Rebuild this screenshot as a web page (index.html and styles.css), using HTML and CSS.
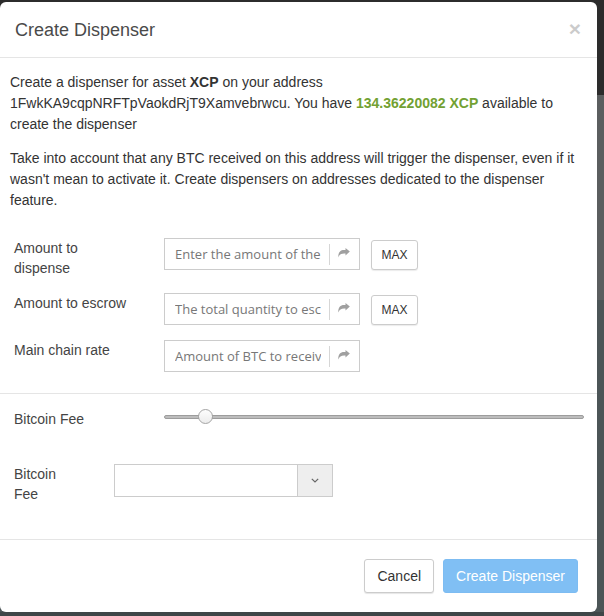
FILE: index.html
```html
<!DOCTYPE html>
<html>
<head>
<meta charset="utf-8">
<link rel="stylesheet" href="styles.css">
</head>
<body>
<div class="modal">
  <div class="modal-header">
    <h4 class="title">Create Dispenser</h4>
    <span class="close">×</span>
  </div>
  <div class="modal-body">
    <p>Create a dispenser for asset <b>XCP</b> on your address 1FwkKA9cqpNRFTpVaokdRjT9Xamvebrwcu. You have <b class="green">134.36220082 XCP</b> available to create the dispenser</p>
    <p class="last">Take into account that any BTC received on this address will trigger the dispenser, even if it wasn't mean to activate it. Create dispensers on addresses dedicated to the dispenser feature.</p>
    <div class="form">
      <div class="row">
        <label class="lbl">Amount to dispense</label>
        <div class="ig">
          <input class="ig-input" placeholder="Enter the amount of the asset to dispense">
          <span class="sep"></span>
          <span class="ig-icon"><svg width="12" height="10" viewBox="0 0 14 12"><path d="M14 4.3 L8.8 0 V2.4 H7.2 C2.4 2.4 0.2 5 0 11.5 C1.4 8 3.6 6.6 7.2 6.6 H8.8 V9 Z" fill="#a0a0a0"/></svg></span>
        </div>
        <button class="max">MAX</button>
      </div>
      <div class="row">
        <label class="lbl">Amount to escrow</label>
        <div class="ig">
          <input class="ig-input" placeholder="The total quantity to escrow in the dispenser">
          <span class="sep"></span>
          <span class="ig-icon"><svg width="12" height="10" viewBox="0 0 14 12"><path d="M14 4.3 L8.8 0 V2.4 H7.2 C2.4 2.4 0.2 5 0 11.5 C1.4 8 3.6 6.6 7.2 6.6 H8.8 V9 Z" fill="#a0a0a0"/></svg></span>
        </div>
        <button class="max">MAX</button>
      </div>
      <div class="row lastrow">
        <label class="lbl">Main chain rate</label>
        <div class="ig">
          <input class="ig-input" placeholder="Amount of BTC to receive for each dispense">
          <span class="sep"></span>
          <span class="ig-icon"><svg width="12" height="10" viewBox="0 0 14 12"><path d="M14 4.3 L8.8 0 V2.4 H7.2 C2.4 2.4 0.2 5 0 11.5 C1.4 8 3.6 6.6 7.2 6.6 H8.8 V9 Z" fill="#a0a0a0"/></svg></span>
        </div>
      </div>
    </div>
  </div>
  <div class="fee-section">
    <div class="slider-row">
      <label class="lbl">Bitcoin Fee</label>
      <div class="slider">
        <div class="track"><span class="thumb"></span></div>
      </div>
    </div>
    <div class="select-row">
      <label class="lbl narrow">Bitcoin Fee</label>
      <div class="select">
        <span class="select-value"></span>
        <span class="select-btn"><svg width="8" height="5" viewBox="0 0 8 5"><path d="M0.8 0.8 L4 4 L7.2 0.8" fill="none" stroke="#666" stroke-width="1.2"/></svg></span>
      </div>
    </div>
  </div>
  <div class="modal-footer">
    <button class="btn btn-default">Cancel</button>
    <button class="btn btn-primary">Create Dispenser</button>
  </div>
</div>
</body>
</html>
```

FILE: styles.css
```css
html, body {
  margin: 0;
  padding: 0;
}
body {
  width: 604px;
  height: 616px;
  overflow: hidden;
  font-family: "Liberation Sans", Arial, sans-serif;
  font-size: 14px;
  color: #333;
  background:
    linear-gradient(to bottom, #2c2c2c 0, #2c2c2c 95px, #5b5e5f 95px, #5b5e5f 300px, #4c5557 300px, #4c5557 612px, #3e4648 612px);
}
.modal {
  margin-top: 2px;
  width: 597px;
  height: 610px;
  box-sizing: border-box;
  background: #fff;
  border-radius: 6px;
  display: flex;
  flex-direction: column;
}
.modal-header {
  flex: none;
  height: 56px;
  box-sizing: border-box;
  padding: 0 15px;
  border-bottom: 1px solid #e5e5e5;
  display: flex;
  align-items: center;
  justify-content: space-between;
}
.title {
  margin: 0;
  font-size: 18px;
  font-weight: normal;
  line-height: 24px;
  color: #4a4a4a;
}
.close {
  font-size: 21px;
  font-weight: bold;
  line-height: 1;
  color: #000;
  opacity: 0.2;
  margin-top: -3px;
  margin-right: 1px;
}
.modal-body {
  flex: none;
  padding: 14px 10px 21px 10px;
}
.modal-body p {
  margin: 0 0 13px;
  line-height: 21px;
}
.modal-body p.last {
  margin-bottom: 27px;
}
.green {
  color: #72a132;
}
.row {
  display: grid;
  grid-template-columns: 139px 196px 47px;
  column-gap: 11px;
  align-items: start;
  padding-left: 4px;
  margin-bottom: 15px;
}
.row.lastrow {
  margin-bottom: 0;
}
.lbl {
  display: block;
  width: 118px;
  line-height: 20px;
  color: #444;
}
.ig {
  height: 32px;
  box-sizing: border-box;
  border: 1px solid #ccc;
  display: flex;
  align-items: center;
  background: #fff;
}
.ig-input {
  flex: 0 0 164px;
  width: 164px;
  height: 30px;
  box-sizing: border-box;
  border: 0;
  outline: none;
  padding: 0 8px 0 10px;
  margin: 0;
  font-family: "Open Sans", sans-serif;
  font-size: 13px;
  color: #555;
  background: transparent;
}
.ig-input::placeholder {
  color: #777;
}
.sep {
  width: 1px;
  height: 21px;
  background: #d6d6d6;
}
.ig-icon {
  flex: 1;
  display: flex;
  justify-content: center;
  align-items: center;
  padding-right: 2px;
  margin-top: -2px;
}
.max {
  margin-top: 2px;
  width: 47px;
  height: 30px;
  box-sizing: border-box;
  padding: 0;
  border: 1px solid #ccc;
  border-radius: 3px;
  background: #fff;
  font-family: "Liberation Sans", Arial, sans-serif;
  font-size: 12px;
  color: #333;
  box-shadow: 0 1px 1px rgba(0,0,0,0.08);
}
.fee-section {
  flex: none;
  border-top: 1px solid #e5e5e5;
  padding: 15px 13px 35px 14px;
}
.slider-row {
  display: grid;
  grid-template-columns: 150px 420px;
  height: 20px;
}
.slider {
  position: relative;
  height: 20px;
}
.track {
  position: relative;
  margin-top: 6px;
  height: 4px;
  box-sizing: border-box;
  border: 1px solid #9d9d9d;
  border-radius: 3px;
  background: #bdbdbd;
}
.thumb {
  position: absolute;
  left: 33px;
  top: -7px;
  width: 15px;
  height: 15px;
  box-sizing: border-box;
  border: 1px solid #a4a4a4;
  border-radius: 50%;
  background: linear-gradient(#fdfdfd, #ececec);
}
.select-row {
  display: grid;
  grid-template-columns: 100px 219px;
  margin-top: 35px;
}
.lbl.narrow {
  width: 62px;
}
.select {
  height: 33px;
  box-sizing: border-box;
  border: 1px solid #ccc;
  display: flex;
}
.select-value {
  flex: 1;
}
.select-btn {
  width: 34px;
  background: #eee;
  border-left: 1px solid #ccc;
  display: flex;
  align-items: center;
  justify-content: center;
}
.modal-footer {
  flex: none;
  border-top: 1px solid #e5e5e5;
  padding: 19px;
  display: flex;
  justify-content: flex-end;
  gap: 9px;
}
.btn {
  height: 34px;
  box-sizing: border-box;
  padding: 6px 12px;
  border: 1px solid #ccc;
  border-radius: 3px;
  font-family: "Liberation Sans", Arial, sans-serif;
  font-size: 14px;
  line-height: 20px;
}
.btn-default {
  background: #fff;
  color: #333;
  box-shadow: 0 1px 1px rgba(0,0,0,0.1);
}
.btn-primary {
  background: #80bff4;
  border-color: #7dbcf2;
  color: #fff;
}
```
